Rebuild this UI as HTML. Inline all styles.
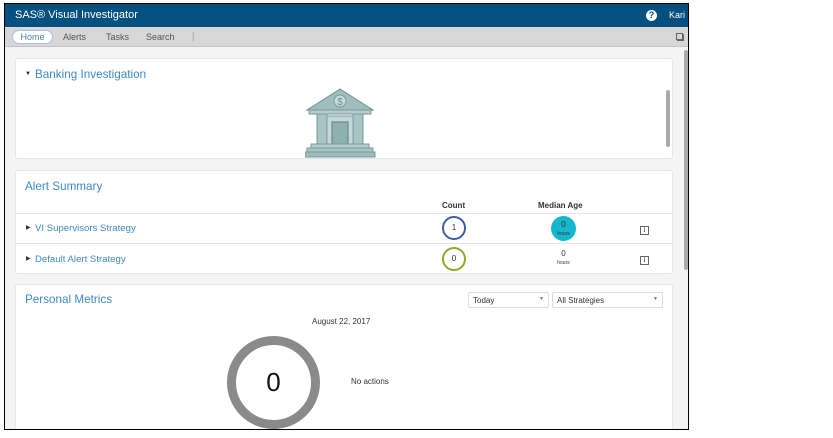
<!DOCTYPE html>
<html><head><meta charset="utf-8"><style>
*{margin:0;padding:0;box-sizing:border-box}
body{width:833px;height:438px;background:#fff;font-family:"Liberation Sans",sans-serif;position:relative;overflow:hidden}
.frame{position:absolute;left:4px;top:3px;width:685px;height:427px;border:1px solid #000;overflow:hidden;background:#f4f4f4}
.hdr{position:absolute;left:0;top:0;width:100%;height:23px;background:#04507f;color:#fff}
.nav{position:absolute;left:0;top:23px;width:100%;height:20px;background:#d7d7d7;border-bottom:1px solid #c4c4c4;font-size:9px;color:#555}
.card{position:absolute;left:10px;width:658px;background:#fff;border:1px solid #e6e6e6;border-radius:3px}
.t{position:absolute;color:#3f8ac4;font-size:11.7px}
.s{position:absolute;font-size:8px;color:#333}
</style></head><body>
<div class="frame">
<div class="hdr">
 <div style="position:absolute;left:10px;top:5px;font-size:11px">SAS® Visual Investigator</div>
 <div style="position:absolute;left:641px;top:6px;width:11px;height:11px;border-radius:50%;background:#fff;color:#04507f;font-size:9px;font-weight:bold;text-align:center;line-height:11px">?</div>
 <div style="position:absolute;left:664px;top:6px;font-size:9px">Kari</div>
</div>
<div class="nav">
 <div style="position:absolute;left:7px;top:3px;width:41px;height:14px;border:1px solid #a8c4dc;border-radius:8px;background:#fff;text-align:center;line-height:12px;color:#4a7fb0">Home</div>
 <div style="position:absolute;left:58px;top:5px">Alerts</div>
 <div style="position:absolute;left:101px;top:5px">Tasks</div>
 <div style="position:absolute;left:141px;top:5px">Search</div>
 <div style="position:absolute;left:187px;top:4px;color:#999">|</div>
 <div style="position:absolute;left:671px;top:6px;width:7px;height:7px;border:1px solid #666;box-shadow:1px 1px 0 #666"></div>
</div>
<div style="position:absolute;left:679px;top:46px;width:4px;height:220px;background:#aaa;border-radius:2px"></div>
<div class="card" style="top:54px;height:101px">
 <div style="position:absolute;left:9px;top:12px;font-size:6px;color:#222">▼</div>
 <div class="t" style="left:19px;top:9px">Banking Investigation</div>
 <div style="position:absolute;left:650px;top:31px;width:4px;height:57px;background:#aaa;border-radius:2px"></div>
 <svg style="position:absolute;left:289px;top:29px" width="71" height="70" viewBox="0 0 71 70">
  <polygon points="35,1 2,22 68,22" fill="#9fbdbd" stroke="#6f9090"/>
  <circle cx="35" cy="13" r="6" fill="#c8dcdc" stroke="#7a9a9a"/>
  <text x="35" y="17" font-size="10" text-anchor="middle" fill="#6f9090" font-family="Liberation Sans">$</text>
  <rect x="4" y="22" width="62" height="4" fill="#b5cccc" stroke="#7a9a9a"/>
  <rect x="12" y="26" width="10" height="30" fill="#a9c4c4" stroke="#7a9a9a"/>
  <rect x="48" y="26" width="10" height="30" fill="#a9c4c4" stroke="#7a9a9a"/>
  <rect x="22" y="28" width="26" height="28" fill="#c5d8d8" stroke="#7a9a9a"/>
  <rect x="27" y="34" width="16" height="22" fill="#8fb0b0" stroke="#5f8080"/>
  <rect x="6" y="56" width="58" height="4" fill="#b5cccc" stroke="#7a9a9a"/>
  <rect x="2" y="60" width="66" height="4" fill="#a9c4c4" stroke="#7a9a9a"/>
  <rect x="0" y="64" width="70" height="5" fill="#9fbdbd" stroke="#7a9a9a"/>
 </svg>
</div>
<div class="card" style="top:166px;height:104px">
 <div class="t" style="left:9px;top:9px">Alert Summary</div>
 <div class="s" style="left:426px;top:30px;font-weight:bold">Count</div>
 <div class="s" style="left:522px;top:30px;font-weight:bold">Median Age</div>
 <div style="position:absolute;left:0;top:42px;width:100%;border-top:1px solid #e6e6e6"></div>
 <div style="position:absolute;left:0;top:72px;width:100%;border-top:1px solid #e6e6e6"></div>
 <div class="s" style="left:10px;top:53px;font-size:6px">▶</div>
 <div class="t" style="left:19px;top:52px;font-size:9.6px">VI Supervisors Strategy</div>
 <div class="s" style="left:10px;top:84px;font-size:6px">▶</div>
 <div class="t" style="left:19px;top:83px;font-size:9.6px">Default Alert Strategy</div>
 <div style="position:absolute;left:426px;top:45px;width:24px;height:24px;border:2px solid #3e5ca8;border-radius:50%;text-align:center;line-height:20px;font-size:8px;color:#333">1</div>
 <div style="position:absolute;left:426px;top:76px;width:24px;height:24px;border:2px solid #8aab2a;border-radius:50%;text-align:center;line-height:20px;font-size:8px;color:#333">0</div>
 <div style="position:absolute;left:535px;top:45px;width:25px;height:25px;border-radius:50%;background:#16b6cc;text-align:center;font-size:8px;color:#333;line-height:8px;padding-top:5px">0<br><span style="font-size:5px">hours</span></div>
 <div style="position:absolute;left:535px;top:79px;width:25px;text-align:center;font-size:8px;color:#333;line-height:8px">0<br><span style="font-size:5px">hours</span></div>
 <div style="position:absolute;left:624px;top:55px;width:9px;height:9px;border:1px solid #666;font-size:7px;text-align:center;line-height:7px;font-family:'Liberation Serif',serif">i</div>
 <div style="position:absolute;left:624px;top:85px;width:9px;height:9px;border:1px solid #666;font-size:7px;text-align:center;line-height:7px;font-family:'Liberation Serif',serif">i</div>
</div>
<div class="card" style="top:280px;height:160px">
 <div class="t" style="left:9px;top:8px">Personal Metrics</div>
 <div style="position:absolute;left:452px;top:7px;width:81px;height:16px;border:1px solid #ddd;border-radius:2px;font-size:8px;color:#333;padding:3px 4px">Today<span style="position:absolute;right:4px;top:3px;font-size:5px;color:#4a7fb0">▼</span></div>
 <div style="position:absolute;left:536px;top:7px;width:111px;height:16px;border:1px solid #ddd;border-radius:2px;font-size:8px;color:#333;padding:3px 4px">All Strategies<span style="position:absolute;right:4px;top:3px;font-size:5px;color:#4a7fb0">▼</span></div>
 <div class="s" style="left:296px;top:32px">August 22, 2017</div>
 <div style="position:absolute;left:211px;top:51px;width:93px;height:93px;border:9px solid #8a8a8a;border-radius:50%;text-align:center;line-height:75px;font-size:26px;color:#111">0</div>
 <div class="s" style="left:335px;top:92px">No actions</div>
</div>
</div>
</body></html>
